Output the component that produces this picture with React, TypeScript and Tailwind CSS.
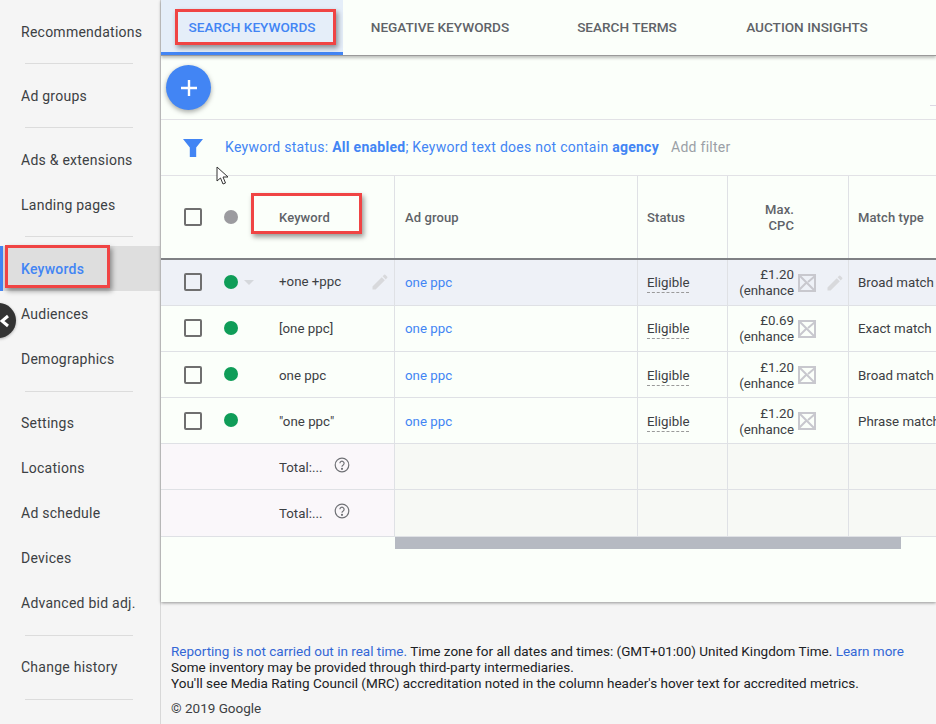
import React from "react";

const Divider = ({ shift }: { shift?: boolean }) => (
  <div className={`h-px bg-[#dcdcdc] mx-[25px] w-[108px] ${shift ? "mt-[10px] mb-[8px]" : "my-[9px]"}`} />
);

const NavItem = ({ label, active }: { label: string; active?: boolean }) => (
  <div className={`h-[45px] flex items-center pt-[2px] text-[14px] tracking-[0.25px] ${active ? "bg-[#dedede] text-[#4285f4] font-medium border-l-[3px] border-[#4285f4] pl-[18px]" : "text-[#3c4043] pl-[21px]"}`}>
    {label}
  </div>
);

const Check = () => <div className="w-[18px] h-[18px] border-2 border-[#6f6f6f] rounded-[2px]" />;

const Pencil = () => (
  <svg width="20" height="20" viewBox="0 0 24 24" fill="#d8d9dc">
    <path d="M3 17.25V21h3.75L17.81 9.94l-3.75-3.75L3 17.25zM20.71 7.04a1 1 0 0 0 0-1.41l-2.34-2.34a1 1 0 0 0-1.41 0l-1.83 1.83 3.75 3.75 1.83-1.83z" />
  </svg>
);

const BidIcon = () => (
  <svg width="20" height="20" viewBox="0 0 20 20" fill="none" stroke="#c8c8ce" strokeWidth="2" className="shrink-0">
    <rect x="2" y="2" width="16" height="16" />
    <path d="M2 2l16 16M2 17l7-7M18 3l-7 6" />
  </svg>
);

const Help = () => (
  <svg width="16" height="16" viewBox="0 0 16 16" fill="none" stroke="#6f7175" strokeWidth="1.2">
    <circle cx="8" cy="8" r="6.8" />
    <path d="M5.9 6.3a2.1 2.1 0 1 1 3.3 1.7c-.8.5-1.2.9-1.2 1.8" />
    <circle cx="8" cy="11.8" r=".5" fill="#6f7175" />
  </svg>
);

const RedBox = ({ className }: { className: string }) => (
  <div className={`absolute border-[3px] border-[#f04444] shadow-[2px_3px_5px_rgba(0,0,0,0.4)] ${className}`} />
);

const cols = "grid grid-cols-[234px_243px_90px_121px_120px]";
const cell = "border-r border-[#dfe1e5] h-full";

const rows = [
  { kw: "+one +ppc", bid: "£1.20", match: "Broad match", hover: true, low: false },
  { kw: "[one ppc]", bid: "£0.69", match: "Exact match", low: false },
  { kw: "one ppc", bid: "£1.20", match: "Broad match", low: true },
  { kw: '"one ppc"', bid: "£1.20", match: "Phrase match", low: true },
];

export default function App() {
  return (
    <div className="relative w-[936px] h-[724px] overflow-hidden flex bg-[#f5f5f5] font-['Roboto',sans-serif] text-[14px] text-[#3c4043]">
      <aside className="w-[161px] shrink-0 pt-[9px] border-r border-[#d8d8d8]">
        <NavItem label="Recommendations" />
        <Divider />
        <NavItem label="Ad groups" />
        <Divider />
        <NavItem label="Ads & extensions" />
        <NavItem label="Landing pages" />
        <Divider />
        <NavItem label="Keywords" active />
        <NavItem label="Audiences" />
        <NavItem label="Demographics" />
        <Divider shift />
        <NavItem label="Settings" />
        <NavItem label="Locations" />
        <NavItem label="Ad schedule" />
        <NavItem label="Devices" />
        <NavItem label="Advanced bid adj." />
        <Divider shift />
        <NavItem label="Change history" />
        <Divider shift />
      </aside>

      <main className="flex-1 min-w-0 flex flex-col">
        <div className="h-[602px] bg-[#fbfffa] shadow-[0_1px_3px_rgba(0,0,0,0.4)] flex flex-col overflow-hidden">
          <div className="h-[56px] shrink-0 flex items-stretch border-b border-[#9a9a9a] shadow-[0_2px_3px_rgba(0,0,0,0.25)] font-medium text-[13.6px] text-[#5f6368] uppercase">
            <div className="w-[182px] pt-[3px] flex items-center justify-center bg-[#e5eef9] text-[#4285f4] border-b-[3px] border-[#4285f4]">Search keywords</div>
            <div className="w-[194px] pt-[3px] pb-[3px] flex items-center justify-center">Negative keywords</div>
            <div className="w-[180px] pt-[3px] pb-[3px] flex items-center justify-center">Search terms</div>
            <div className="w-[180px] pt-[3px] pb-[3px] flex items-center justify-center">Auction insights</div>
          </div>

          <div className="h-[64px] shrink-0 border-b border-[#e2e2e6] flex items-center pl-[5px] relative">
            <div className="w-[45px] h-[45px] rounded-full bg-[#4285f4] shadow-[0_2px_5px_rgba(0,0,0,0.35)] flex items-center justify-center">
              <svg width="18" height="18" viewBox="0 0 18 18" fill="white"><path d="M7.8 1h2.4v6.8H17v2.4h-6.8V17H7.8v-6.8H1V7.8h6.8z" /></svg>
            </div>
            <div className="absolute right-0 bottom-[13px] w-[6px] h-px bg-[#dcd8e4]" />
          </div>

          <div className="h-[56px] shrink-0 border-b border-[#e2e2e6] flex items-center text-[#4285f4] tracking-[0.27px]">
            <svg width="20" height="20" viewBox="0 0 20 20" fill="#4285f4" className="ml-[22px] mr-[22px]"><path d="M0 1h20l-6.8 8.4V19H6.8V9.4z" /></svg>
            <span>Keyword status: <b className="font-bold">All enabled</b>; Keyword text does not contain <b className="font-bold">agency</b></span>
            <span className="ml-[12px] text-[#9aa0a6]">Add filter</span>
          </div>

          <div className={`${cols} h-[84px] shrink-0 border-b-2 border-[#7f8184] text-[#5f6368] font-medium text-[13px] tracking-[0.1px]`}>
            <div className={`${cell} flex items-center`}>
              <div className="ml-[23px]"><Check /></div>
              <div className="ml-[22px] w-[14px] h-[14px] rounded-full bg-[#9b9b9f]" />
              <span className="ml-[41px] translate-y-px">Keyword</span>
            </div>
            <div className={`${cell} flex items-center pl-[10px]`}><span className="translate-y-px">Ad group</span></div>
            <div className={`${cell} flex items-center pl-[9px]`}><span className="translate-y-px">Status</span></div>
            <div className={`${cell} flex items-center justify-end pr-[54px] text-right leading-[16px]`}>
              <div className="translate-y-px">Max.<br />CPC</div>
            </div>
            <div className="flex items-center pl-[9px] whitespace-nowrap"><span className="translate-y-px">Match type</span></div>
          </div>

          {rows.map((r) => {
            const shift = r.low ? "translate-y-px" : "";
            return (
              <div key={r.kw} className={`${cols} h-[46px] shrink-0 border-b border-[#dfe1e5] text-[13.3px] ${r.hover ? "bg-[#eef1f7]" : ""}`}>
                <div className={`${cell} flex items-center relative`}>
                  <div className={`ml-[23px] ${r.low ? "" : "-translate-y-px"}`}><Check /></div>
                  <div className="ml-[22px] w-[14px] h-[14px] rounded-full bg-[#0f9d58] -translate-y-px" />
                  {r.hover && <div className="ml-[6px] w-0 h-0 border-x-[5px] border-x-transparent border-t-[5px] border-t-[#d5d8dc]" />}
                  <span className={`${r.hover ? "ml-[25px] -translate-y-px" : "ml-[41px]"} ${shift}`}>{r.kw}</span>
                  {r.hover && <div className="absolute right-[4px] top-[12px]"><Pencil /></div>}
                </div>
                <div className={`${cell} flex items-center pl-[10px] text-[#4285f4]`}><span className={shift}>one ppc</span></div>
                <div className={`${cell} flex items-center pl-[9px]`}>
                  <span className={`border-b border-dashed border-[#9a9a9a] leading-[18px] translate-y-px ${r.low ? "mt-[2px]" : ""}`}>Eligible</span>
                </div>
                <div className={`${cell} flex items-center relative pl-[8px]`}>
                  <div className={`w-[58px] text-right leading-[16px] whitespace-nowrap ${shift}`}>{r.bid}<br />(enhance</div>
                  <div className="ml-[3px]"><BidIcon /></div>
                  {r.hover && <div className="ml-[8px]"><Pencil /></div>}
                </div>
                <div className="flex items-center pl-[9px] whitespace-nowrap"><span className={shift}>{r.match}</span></div>
              </div>
            );
          })}

          {[46, 47].map((h) => (
            <div key={h} className={`${cols} ${h === 46 ? "h-[46px]" : "h-[47px]"} shrink-0 border-b border-[#dfe1e5] bg-[#f7f9f5] text-[13.3px]`}>
              <div className={`${cell} flex items-center bg-[#faf7fa]`}>
                <span className="ml-[118px] translate-y-px">Total:...</span>
                <div className="ml-[12px] -translate-y-[2px]"><Help /></div>
              </div>
              <div className={cell} />
              <div className={cell} />
              <div className={cell} />
              <div />
            </div>
          ))}

          <div className="h-[12px] shrink-0 ml-[234px] w-[506px] bg-[#b6bac2]" />
        </div>

        <footer className="pl-[10px] pt-[41px] text-[13.5px] leading-[16px] text-[#202124] whitespace-nowrap">
          <div><span className="text-[#3367d6]">Reporting is not carried out in real time.</span> Time zone for all dates and times: (GMT+01:00) United Kingdom Time. <span className="text-[#3367d6]">Learn more</span></div>
          <div>Some inventory may be provided through third-party intermediaries.</div>
          <div>You'll see Media Rating Council (MRC) accreditation noted in the column header's hover text for accredited metrics.</div>
          <div className="mt-[9px] text-[#3c4043]">© 2019 Google</div>
        </footer>
      </main>

      <RedBox className="left-[175px] top-[9px] w-[161px] h-[36px]" />
      <RedBox className="left-[251px] top-[193px] w-[111px] h-[41px]" />
      <RedBox className="left-[5px] top-[245px] w-[105px] h-[43px]" />

      <div className="absolute -left-[19px] top-[303px] w-[35px] h-[35px] rounded-full bg-[#333333] shadow-[0_1px_3px_rgba(0,0,0,0.3)] flex items-center justify-end pr-[7px]">
        <svg width="9" height="14" viewBox="0 0 9 14" fill="none" stroke="white" strokeWidth="3"><path d="M8 2L2 7l6 5" /></svg>
      </div>

      <svg className="absolute left-[216px] top-[166px]" width="14" height="20" viewBox="0 0 14 20" fill="white" stroke="#333" strokeWidth="1">
        <path d="M1 1v14l3.5-3 2.5 6 2.5-1-2.5-6h5z" />
      </svg>
    </div>
  );
}
